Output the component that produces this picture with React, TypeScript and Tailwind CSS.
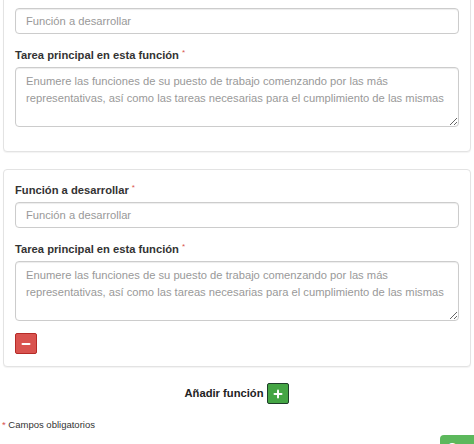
import { Plus, Minus } from 'lucide-react'

const font = { fontFamily: '"Liberation Sans", Arial, sans-serif' }

const tareaPlaceholder =
    'Enumere las funciones de su puesto de trabajo comenzando por las más representativas, así como las tareas necesarias para el cumplimiento de las mismas'

function Label({ text }: { text: string }) {
    return (
        <label className="block h-4 leading-4 text-[11.2px] font-bold text-[#333]">
            {text}
            <span className="relative -top-[4px] ml-[3px] text-[8px] font-normal text-[#d9534f]">*</span>
        </label>
    )
}

function FuncionPanel({ removable }: { removable?: boolean }) {
    return (
        <div className="bg-white border border-[#e3e3e3] rounded-[4px] shadow-[0_1px_1px_rgba(0,0,0,0.05)] px-[11px] pt-[12px] pb-[12px]">
            {/* Función */}
            <div className="mb-[13px]">
                <Label text="Función a desarrollar" />
                <input
                    type="text"
                    placeholder="Función a desarrollar"
                    className="mt-[4px] block w-full h-[26px] px-[10px] border border-[#ccc] rounded-[4px] text-[11.2px] text-[#555] placeholder:text-[#999] shadow-[inset_0_1px_1px_rgba(0,0,0,0.075)] outline-none"
                />
            </div>

            {/* Tarea */}
            <div className="mb-[12px]">
                <Label text="Tarea principal en esta función" />
                <textarea
                    placeholder={tareaPlaceholder}
                    className="mt-[4px] block w-full h-[60px] px-[10px] pt-[5px] border border-[#ccc] rounded-[4px] text-[11.2px] leading-[17px] text-[#555] placeholder:text-[#999] shadow-[inset_0_1px_1px_rgba(0,0,0,0.075)] outline-none resize-y"
                />
            </div>

            {removable && (
                <button className="flex items-center justify-center w-[22px] h-[21px] bg-[#d9534f] border border-[#b52b27] rounded-[2px]">
                    <Minus className="w-[12px] h-[12px] text-white" strokeWidth={4} />
                </button>
            )}
        </div>
    )
}

export default function App() {
    return (
        <div className="h-[444px] overflow-hidden bg-white" style={font}>
            <div className="px-[3px] -mt-[25px]">
                <div className="mb-[17px]">
                    <FuncionPanel />
                </div>
                <div className="-mb-[12px]">
                    <FuncionPanel removable />
                </div>
            </div>

            {/* Añadir función */}
            <div className="mt-[28px] flex items-center justify-center gap-[4px]">
                <span className="text-[11.2px] font-bold text-[#222]">Añadir función</span>
                <button className="flex items-center justify-center w-[22px] h-[21px] bg-[#44a544] border border-[#1f3d2a] rounded-[2px]">
                    <Plus className="w-[12px] h-[12px] text-white" strokeWidth={4} />
                </button>
            </div>

            <p className="mt-[14px] pl-[2px] text-[9.5px] text-[#333]">
                <span className="text-[#d9534f]">*</span> Campos obligatorios
            </p>

            <div className="mt-[3px] flex justify-end">
                <button className="-mr-[30px] w-[64px] h-[24px] bg-[#5cb85c] rounded-[4px] text-white text-[11px] font-bold text-left pl-[8px]">
                    Guardar
                </button>
            </div>
        </div>
    )
}
